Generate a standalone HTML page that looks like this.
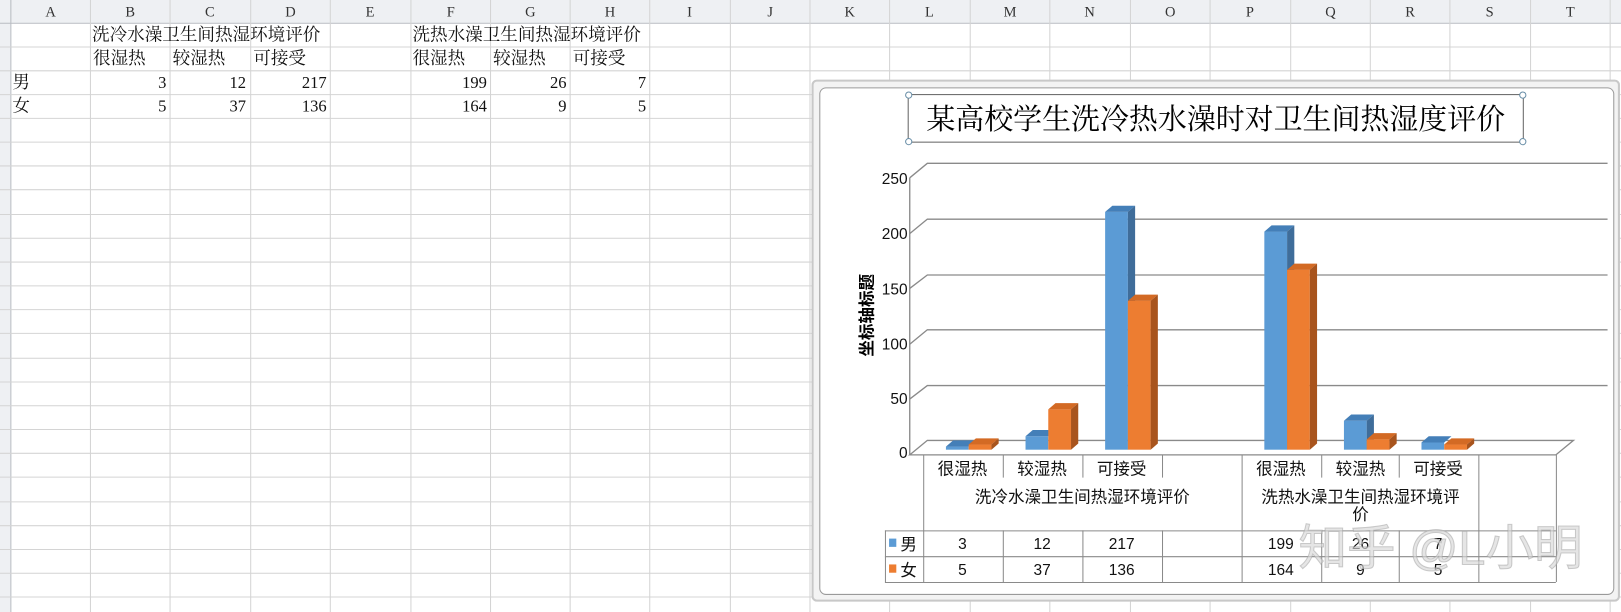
<!DOCTYPE html>
<html><head><meta charset="utf-8"><style>
html,body{margin:0;padding:0;background:#fff;overflow:hidden}
svg{display:block}
</style></head><body>
<svg width="1621" height="612" viewBox="0 0 1568 592" preserveAspectRatio="none" xmlns="http://www.w3.org/2000/svg">
<rect width="1568" height="592" fill="#fff"/>
<rect x="0" y="0" width="1568" height="22" fill="#eef0f3"/>
<rect x="0" y="0" width="10" height="592" fill="#eef0f3"/>
<g stroke="#d0d3d8" stroke-width="1">
<line x1="0" y1="22.5" x2="1568" y2="22.5" stroke="#b8bcc2"/>
<line x1="10.5" y1="0" x2="10.5" y2="592" stroke="#b8bcc2"/>
</g>
<g stroke="#d4d4d4" stroke-width="1">
<line x1="87.5" y1="0" x2="87.5" y2="592"/><line x1="164.5" y1="0" x2="164.5" y2="592"/>
<line x1="242.5" y1="0" x2="242.5" y2="592"/><line x1="319.5" y1="0" x2="319.5" y2="592"/>
<line x1="397.5" y1="0" x2="397.5" y2="592"/><line x1="474.5" y1="0" x2="474.5" y2="592"/>
<line x1="551.5" y1="0" x2="551.5" y2="592"/><line x1="628.5" y1="0" x2="628.5" y2="592"/>
<line x1="706.5" y1="0" x2="706.5" y2="592"/><line x1="783.5" y1="0" x2="783.5" y2="592"/>
<line x1="860.5" y1="0" x2="860.5" y2="592"/><line x1="938.5" y1="0" x2="938.5" y2="592"/>
<line x1="1015.5" y1="0" x2="1015.5" y2="592"/><line x1="1093.5" y1="0" x2="1093.5" y2="592"/>
<line x1="1170.5" y1="0" x2="1170.5" y2="592"/><line x1="1248.5" y1="0" x2="1248.5" y2="592"/>
<line x1="1325.5" y1="0" x2="1325.5" y2="592"/><line x1="1402.5" y1="0" x2="1402.5" y2="592"/>
<line x1="1480.5" y1="0" x2="1480.5" y2="592"/><line x1="1557.5" y1="0" x2="1557.5" y2="592"/>
</g>
<g stroke="#d4d4d4" stroke-width="1">
<line x1="0" y1="45.5" x2="1568" y2="45.5"/><line x1="0" y1="68.5" x2="1568" y2="68.5"/>
<line x1="0" y1="91.5" x2="1568" y2="91.5"/><line x1="0" y1="114.5" x2="1568" y2="114.5"/>
<line x1="0" y1="137.5" x2="1568" y2="137.5"/><line x1="0" y1="160.5" x2="1568" y2="160.5"/>
<line x1="0" y1="183.5" x2="1568" y2="183.5"/><line x1="0" y1="207.5" x2="1568" y2="207.5"/>
<line x1="0" y1="230.5" x2="1568" y2="230.5"/><line x1="0" y1="253.5" x2="1568" y2="253.5"/>
<line x1="0" y1="276.5" x2="1568" y2="276.5"/><line x1="0" y1="299.5" x2="1568" y2="299.5"/>
<line x1="0" y1="322.5" x2="1568" y2="322.5"/><line x1="0" y1="346.5" x2="1568" y2="346.5"/>
<line x1="0" y1="369.5" x2="1568" y2="369.5"/><line x1="0" y1="392.5" x2="1568" y2="392.5"/>
<line x1="0" y1="415.5" x2="1568" y2="415.5"/><line x1="0" y1="438.5" x2="1568" y2="438.5"/>
<line x1="0" y1="461.5" x2="1568" y2="461.5"/><line x1="0" y1="485.5" x2="1568" y2="485.5"/>
<line x1="0" y1="508.5" x2="1568" y2="508.5"/><line x1="0" y1="531.5" x2="1568" y2="531.5"/>
<line x1="0" y1="554.5" x2="1568" y2="554.5"/><line x1="0" y1="577.5" x2="1568" y2="577.5"/>
</g>
<g font-family="Liberation Serif, Noto Serif CJK SC, serif" font-size="14" fill="#333" text-anchor="middle">
<text x="49" y="16">A</text><text x="126" y="16">B</text><text x="203" y="16">C</text><text x="281" y="16">D</text>
<text x="358" y="16">E</text><text x="436" y="16">F</text><text x="513" y="16">G</text><text x="590" y="16">H</text>
<text x="667" y="16">I</text><text x="745" y="16">J</text><text x="822" y="16">K</text><text x="899" y="16">L</text>
<text x="977" y="16">M</text><text x="1054" y="16">N</text><text x="1132" y="16">O</text><text x="1209" y="16">P</text>
<text x="1287" y="16">Q</text><text x="1364" y="16">R</text><text x="1441" y="16">S</text><text x="1519" y="16">T</text>
</g>
<g font-family="Liberation Serif, Noto Serif CJK SC, serif" font-size="17" fill="#111">
<text x="89" y="39">洗冷水澡卫生间热湿环境评价</text>
<text x="399" y="39">洗热水澡卫生间热湿环境评价</text>
<text x="90" y="62">很湿热</text><text x="167" y="62">较湿热</text><text x="245" y="62">可接受</text>
<text x="399" y="62">很湿热</text><text x="477" y="62">较湿热</text><text x="554" y="62">可接受</text>
<text x="12" y="85">男</text><text x="12" y="108">女</text>
</g>
<g font-family="Liberation Serif, serif" font-size="16" fill="#111" text-anchor="end">
<text x="161" y="85">3</text><text x="238" y="85">12</text><text x="316" y="85">217</text>
<text x="471" y="85">199</text><text x="548" y="85">26</text><text x="625" y="85">7</text>
<text x="161" y="108">5</text><text x="238" y="108">37</text><text x="316" y="108">136</text>
<text x="471" y="108">164</text><text x="548" y="108">9</text><text x="625" y="108">5</text>
</g>

<rect x="786" y="78" width="780" height="503" fill="#f3f3f3" stroke="#c8c8c8" stroke-width="2" rx="4"/>
<rect x="793" y="85" width="768" height="490" fill="#fff" stroke="#9a9a9a" stroke-width="1" rx="6"/>
<rect x="878.5" y="91.5" width="595" height="46" fill="#fff" stroke="#666"/>
<g fill="#fff" stroke="#6a8fa8"><circle cx="879" cy="92" r="3"/><circle cx="1473" cy="92" r="3"/><circle cx="879" cy="137" r="3"/><circle cx="1473" cy="137" r="3"/></g>
<text x="1176" y="125" text-anchor="middle" font-family="Liberation Serif, Noto Serif CJK SC, serif" font-size="28" fill="#000">某高校学生洗冷热水澡时对卫生间热湿度评价</text>

<g stroke="#8a8a8a" stroke-width="1.3" fill="none">
<line x1="880" y1="172" x2="880" y2="440"/>
<polyline points="880,172 897,158 1555,158"/>
<polyline points="880,226 897,212 1555,212"/>
<polyline points="880,279 897,266 1555,266"/>
<polyline points="880,333 897,319 1555,319"/>
<polyline points="880,386 897,373 1555,373"/>
<polygon points="880,440 897,426 1522,426 1505,440" fill="#fff"/>
</g>
<g font-family="Liberation Sans, sans-serif" font-size="15" fill="#111" text-anchor="end">
<text x="878" y="178">250</text><text x="878" y="231">200</text><text x="878" y="285">150</text>
<text x="878" y="338">100</text><text x="878" y="391">50</text><text x="878" y="443">0</text>
</g>
<text transform="translate(844,305) rotate(-90)" text-anchor="middle" font-family="Liberation Sans, Noto Sans CJK SC, sans-serif" font-size="16" font-weight="bold" fill="#000">坐标轴标题</text>

<g>
<g fill="#5b9bd5">
<rect x="915" y="432" width="22" height="3"/><rect x="992" y="422" width="22" height="13"/><rect x="1069" y="205" width="22" height="230"/>
<rect x="1223" y="224" width="22" height="211"/><rect x="1300" y="407" width="22" height="28"/><rect x="1375" y="428" width="22" height="7"/>
</g>
<g fill="#447fb8">
<polygon points="915,432 922,426 944,426 937,432"/><polygon points="992,422 999,416 1021,416 1014,422"/>
<polygon points="1069,205 1076,199 1098,199 1091,205"/><polygon points="1223,224 1230,218 1252,218 1245,224"/>
<polygon points="1300,407 1307,401 1329,401 1322,407"/><polygon points="1375,428 1382,422 1404,422 1397,428"/>
</g>
<g fill="#3f6d9a">
<polygon points="1091,205 1098,199 1098,429 1091,435"/><polygon points="1245,224 1252,218 1252,429 1245,435"/>
<polygon points="1322,407 1329,401 1329,429 1322,435"/>
</g>
<g fill="#ed7d31">
<rect x="937" y="430" width="22" height="5"/><rect x="1014" y="396" width="22" height="39"/><rect x="1091" y="291" width="22" height="144"/>
<rect x="1245" y="261" width="22" height="174"/><rect x="1322" y="425" width="22" height="10"/><rect x="1397" y="430" width="22" height="5"/>
</g>
<g fill="#d36a24">
<polygon points="937,430 944,424 966,424 959,430"/><polygon points="1014,396 1021,390 1043,390 1036,396"/>
<polygon points="1091,291 1098,285 1120,285 1113,291"/><polygon points="1245,261 1252,255 1274,255 1267,261"/>
<polygon points="1322,425 1329,419 1351,419 1344,425"/><polygon points="1397,430 1404,424 1426,424 1419,430"/>
</g>
<g fill="#a8541d">
<polygon points="959,430 966,424 966,429 959,435"/><polygon points="1036,396 1043,390 1043,429 1036,435"/>
<polygon points="1113,291 1120,285 1120,429 1113,435"/><polygon points="1267,261 1274,255 1274,429 1267,435"/>
<polygon points="1344,425 1351,419 1351,429 1344,435"/><polygon points="1419,430 1426,424 1426,429 1419,435"/>
</g>
</g>

<g stroke="#8a8a8a" stroke-width="1" fill="none">
<line x1="893.5" y1="440" x2="893.5" y2="563"/>
<line x1="970.5" y1="440" x2="970.5" y2="462"/><line x1="1047.5" y1="440" x2="1047.5" y2="462"/><line x1="1124.5" y1="440" x2="1124.5" y2="462"/>
<line x1="1201.5" y1="440" x2="1201.5" y2="563"/>
<line x1="1278.5" y1="440" x2="1278.5" y2="462"/><line x1="1353.5" y1="440" x2="1353.5" y2="462"/>
<line x1="1430.5" y1="440" x2="1430.5" y2="563"/><line x1="1505.5" y1="440" x2="1505.5" y2="563"/>
<line x1="970.5" y1="513" x2="970.5" y2="563"/><line x1="1047.5" y1="513" x2="1047.5" y2="563"/><line x1="1124.5" y1="513" x2="1124.5" y2="563"/>
<line x1="1278.5" y1="513" x2="1278.5" y2="563"/><line x1="1353.5" y1="513" x2="1353.5" y2="563"/>
<line x1="856.5" y1="513" x2="856.5" y2="563"/>
<line x1="856" y1="513.5" x2="1505" y2="513.5"/><line x1="856" y1="538.5" x2="1505" y2="538.5"/><line x1="856" y1="563.5" x2="1505" y2="563.5"/>
</g>
<g font-family="Liberation Sans, Noto Sans CJK SC, sans-serif" font-size="16" fill="#111" text-anchor="middle">
<text x="931" y="459">很湿热</text><text x="1008" y="459">较湿热</text><text x="1085" y="459">可接受</text>
<text x="1239" y="459">很湿热</text><text x="1316" y="459">较湿热</text><text x="1391" y="459">可接受</text>
<text x="1047" y="486">洗冷水澡卫生间热湿环境评价</text>
<text x="1316" y="486">洗热水澡卫生间热湿环境评</text><text x="1316" y="503">价</text>
</g>
<g font-family="Liberation Sans, sans-serif" font-size="15" fill="#111" text-anchor="middle">
<text x="931" y="531">3</text><text x="1008" y="531">12</text><text x="1085" y="531">217</text>
<text x="1239" y="531">199</text><text x="1316" y="531">26</text><text x="1391" y="531">7</text>
<text x="931" y="556">5</text><text x="1008" y="556">37</text><text x="1085" y="556">136</text>
<text x="1239" y="556">164</text><text x="1316" y="556">9</text><text x="1391" y="556">5</text>
</g>
<rect x="860" y="521" width="7" height="8" fill="#5b9bd5"/>
<rect x="860" y="546" width="7" height="8" fill="#ed7d31"/>
<g font-family="Liberation Sans, Noto Sans CJK SC, sans-serif" font-size="16" fill="#111">
<text x="871" y="532">男</text><text x="871" y="557">女</text>
</g>
<text x="1256" y="546" font-family="Liberation Sans, Noto Sans CJK SC, sans-serif" font-size="47" fill="rgba(215,215,215,0.65)" stroke="rgba(160,160,160,0.5)" stroke-width="1">知乎 @L小明</text>
</svg>
</body></html>
